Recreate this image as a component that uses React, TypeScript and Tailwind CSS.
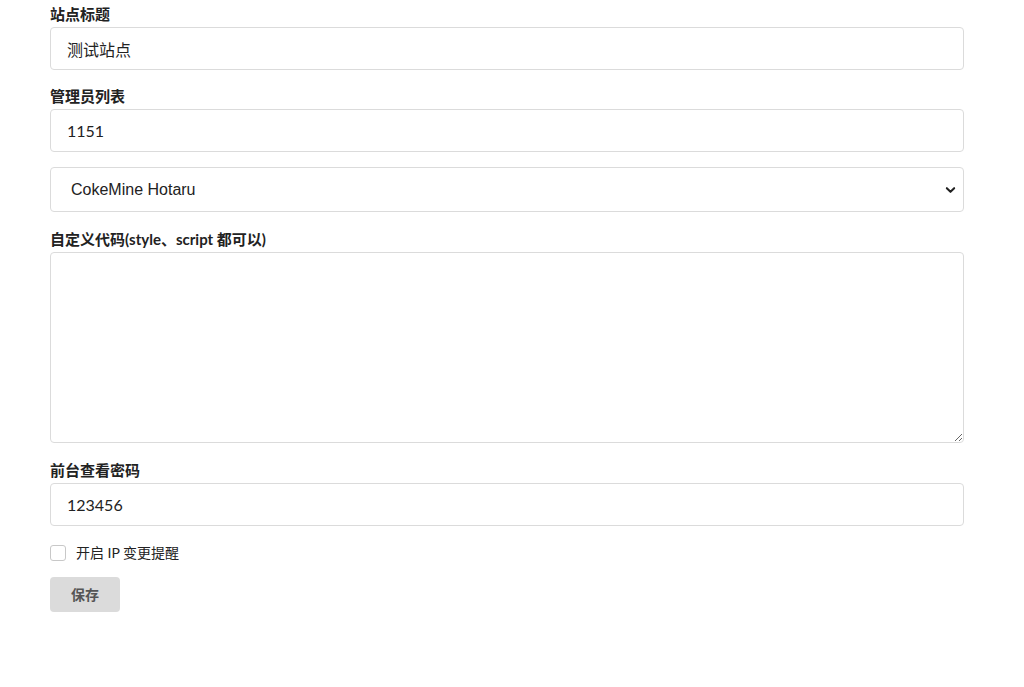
import { useState } from "react";

const font = { fontFamily: 'Lato, "Noto Sans CJK SC", sans-serif' };

function Label({ children }: { children: React.ReactNode }) {
  return (
    <label className="block h-5 leading-5 text-[15px] font-bold text-[#222]">
      {children}
    </label>
  );
}

const inputCls =
  "block w-full h-[43px] mt-[3px] px-4 text-[16px] text-[#222] bg-white border border-[#dbdbdb] rounded-[4px] outline-none";

export default function App() {
  const [title, setTitle] = useState("测试站点");
  const [admins, setAdmins] = useState("1151");
  const [theme, setTheme] = useState("CokeMine Hotaru");
  const [code, setCode] = useState("");
  const [pwd, setPwd] = useState("123456");
  const [notify, setNotify] = useState(false);

  return (
    <div className="min-h-screen bg-white" style={font}>
      <div className="w-[914px] ml-[50px] pt-1">
        {/* 站点标题 */}
        <Label>站点标题</Label>
        <input className={inputCls} value={title} onChange={(e) => setTitle(e.target.value)} />

        {/* 管理员列表 */}
        <div className="mt-4">
          <Label>管理员列表</Label>
          <input className={inputCls} value={admins} onChange={(e) => setAdmins(e.target.value)} />
        </div>

        {/* 主题 */}
        <div className="relative mt-[15px]">
          <select
            value={theme}
            onChange={(e) => setTheme(e.target.value)}
            className="block w-full h-[45px] pl-5 pr-8 appearance-none text-[16px] text-[#222] bg-white border border-[#dbdbdb] rounded-[4px] outline-none"
            style={{ fontFamily: '"Liberation Sans", Arial, sans-serif' }}
          >
            <option>CokeMine Hotaru</option>
            <option>CokeMine Default</option>
          </select>
          <svg
            className="absolute right-[8px] top-1/2 -translate-y-1/2 w-[11px] h-[11px] pointer-events-none"
            viewBox="0 0 12 12"
            fill="none"
          >
            <path d="M2 4l4 4 4-4" stroke="#222" strokeWidth="2.2" strokeLinecap="round" strokeLinejoin="round" />
          </svg>
        </div>

        {/* 自定义代码 */}
        <div className="mt-[17px]">
          <Label>自定义代码(style、script 都可以)</Label>
          <textarea
            className="block w-full h-[191px] mt-[3px] px-4 py-2 text-[16px] bg-white border border-[#dbdbdb] rounded-[4px] outline-none resize-y"
            value={code}
            onChange={(e) => setCode(e.target.value)}
          />
        </div>

        {/* 前台查看密码 */}
        <div className="mt-[17px]">
          <Label>前台查看密码</Label>
          <input className={inputCls} value={pwd} onChange={(e) => setPwd(e.target.value)} />
        </div>

        {/* IP 变更提醒 */}
        <label className="flex items-center gap-[10px] mt-[19px] h-4 cursor-pointer">
          <input
            type="checkbox"
            checked={notify}
            onChange={(e) => setNotify(e.target.checked)}
            className="w-4 h-4 appearance-none border border-[#c8c8c8] rounded-[3px] bg-white checked:bg-[#3273dc]"
          />
          <span className="text-[14px] leading-4 text-[#222]">开启 IP 变更提醒</span>
        </label>

        <button className="mt-4 w-[70px] h-[35px] bg-[#dbdbdb] rounded-[4px] text-[14px] font-bold text-[#555]">
          保存
        </button>
      </div>
    </div>
  );
}
